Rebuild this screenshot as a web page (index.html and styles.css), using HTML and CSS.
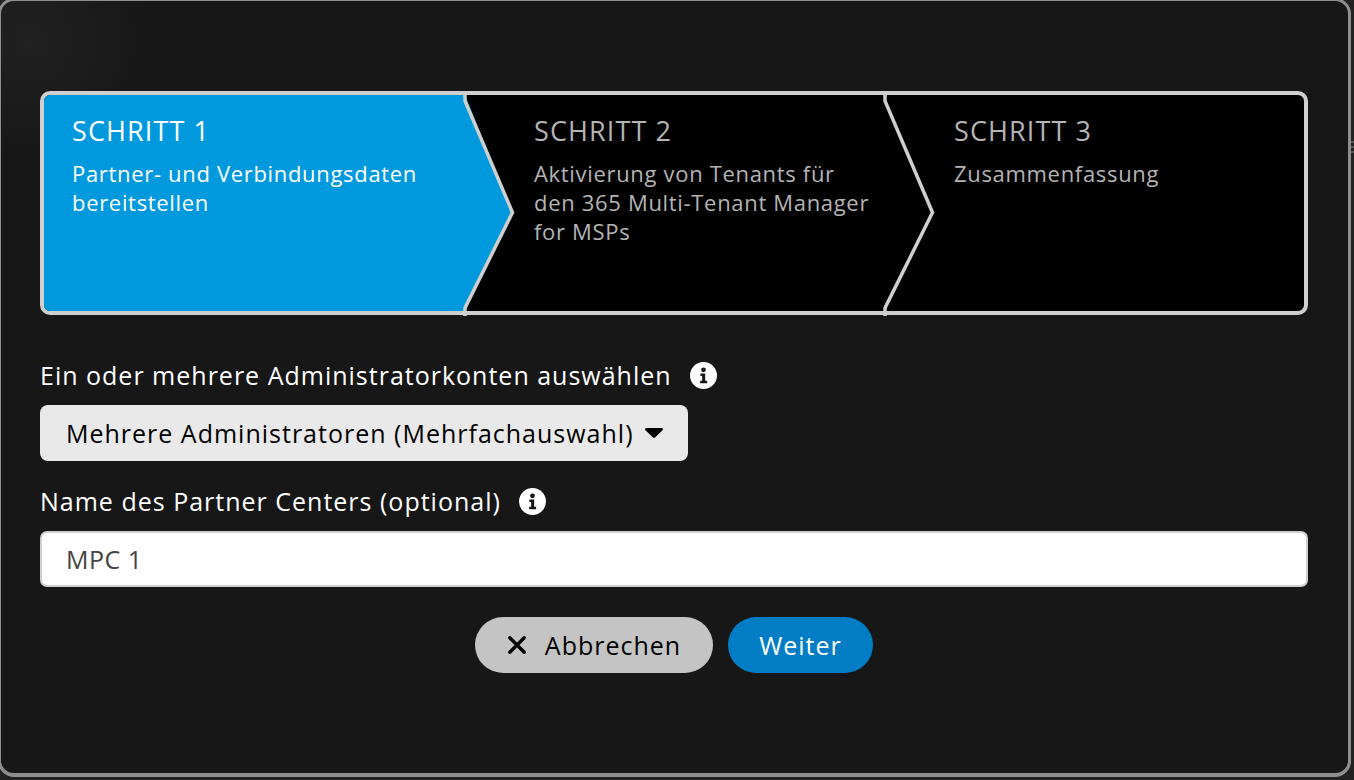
FILE: index.html
```html
<!DOCTYPE html>
<html lang="de">
<head>
<meta charset="utf-8">
<title>Schritt 1</title>
<link rel="stylesheet" href="styles.css">
</head>
<body>
<div class="grip"><i></i><i></i><i></i></div>
<main class="modal">
  <div class="stepper">
    <section class="step step-active">
      <svg class="arrow" viewBox="0 0 50 216" width="50" height="216" aria-hidden="true">
        <polygon points="0,0 47.500,117.500 0,216" fill="#0099dd"/>
        <path d="M0 0V6L47.500 117.500 0 213V221" fill="none" stroke="#cfcfcf" stroke-width="3.500"/>
      </svg>
      <h2 class="step-title">SCHRITT 1</h2>
      <p class="step-text">Partner- und Verbindungsdaten bereitstellen</p>
    </section>
    <section class="step step-mid">
      <svg class="arrow" viewBox="0 0 50 216" width="50" height="216" aria-hidden="true">
        <path d="M0 0V6L47.500 117.500 0 213V221" fill="none" stroke="#cfcfcf" stroke-width="3.500"/>
      </svg>
      <h2 class="step-title">SCHRITT 2</h2>
      <p class="step-text">Aktivierung von Tenants für den 365 Multi-Tenant Manager for MSPs</p>
    </section>
    <section class="step step-last">
      <h2 class="step-title">SCHRITT 3</h2>
      <p class="step-text">Zusammenfassung</p>
    </section>
  </div>

  <div class="label-row label-first">
    <label class="label">Ein oder mehrere Administratorkonten auswählen</label>
    <svg class="info" viewBox="0 0 26 26" width="27" height="27" aria-hidden="true">
      <circle cx="13" cy="13" r="13" fill="#fff"/>
      <circle cx="13" cy="7.500" r="2.300" fill="#171717"/>
      <path d="M10 11h4.600v7H16.500v2.400H9.800V18h1.900v-4.600H10z" fill="#171717"/>
    </svg>
  </div>
  <button class="select" type="button">
    <span>Mehrere Administratoren (Mehrfachauswahl)</span>
    <svg class="caret" viewBox="0 0 18 10" width="18" height="10" aria-hidden="true">
      <path d="M1.500 0h15c1.200 0 1.800 1.400 1 2.200L10 9.600c-.6.500-1.400.500-2 0L.5 2.200C-.3 1.400.3 0 1.500 0z" fill="#000"/>
    </svg>
  </button>

  <div class="label-row label-second">
    <label class="label">Name des Partner Centers (optional)</label>
    <svg class="info" viewBox="0 0 26 26" width="27" height="27" aria-hidden="true">
      <circle cx="13" cy="13" r="13" fill="#fff"/>
      <circle cx="13" cy="7.500" r="2.300" fill="#171717"/>
      <path d="M10 11h4.600v7H16.500v2.400H9.800V18h1.900v-4.600H10z" fill="#171717"/>
    </svg>
  </div>
  <div class="input">MPC 1</div>

  <div class="actions">
    <button class="btn btn-cancel" type="button">
      <svg viewBox="0 0 18 18" width="20" height="20" aria-hidden="true">
        <path d="M2.500 2.500l13 13M15.500 2.500l-13 13" stroke="#000" stroke-width="3" stroke-linecap="round" fill="none"/>
      </svg>
      <span>Abbrechen</span>
    </button>
    <button class="btn btn-next" type="button">Weiter</button>
  </div>
</main>
</body>
</html>
```

FILE: styles.css
```css
* {
  box-sizing: border-box;
}

html,
body {
  height: 100%;
}

body {
  margin: 0;
  overflow: hidden;
  background: #222;
  font-family: "Open Sans", "Liberation Sans", sans-serif;
}

.grip {
  position: absolute;
  top: 141px;
  left: 1351px;
  display: flex;
  flex-direction: column;
  gap: 3px;
}

.grip i {
  display: block;
  width: 3px;
  height: 2px;
  background: #555;
}

.modal {
  width: 1353px;
  height: 779px;
  margin: -2px 0 0 -2px;
  padding: 90px 40px 0 39px;
  border: 3px solid #8e8e8e;
  border-width: 3px 3px 4px 3px;
  border-radius: 16px;
  background: radial-gradient(circle at 30px 40px, #212121 0, #171717 120px), #171717;
}

.stepper {
  display: flex;
  height: 224px;
  border: 4px solid #cfcfcf;
  border-radius: 10px;
  background: #000;
  color: #b4b4b4;
}

.step {
  position: relative;
  flex: none;
  padding-top: 19px;
}

.step-active {
  width: 421px;
  padding-left: 28px;
  padding-right: 20px;
  border-radius: 6px 0 0 6px;
  background: #0099dd;
  color: #fff;
}

.step-mid {
  width: 420px;
  padding-left: 69px;
  padding-right: 10px;
}

.step-last {
  flex: 1;
  padding-left: 69px;
}

.arrow {
  position: absolute;
  top: 0;
  left: 100%;
  z-index: 1;
  overflow: visible;
}

.step-title {
  margin: 0;
  font-size: 27px;
  font-weight: 400;
  line-height: 34px;
  letter-spacing: 1.1px;
}

.step-text {
  margin: 11px 0 0;
  font-size: 22px;
  line-height: 29px;
  letter-spacing: 0.68px;
}

.label-row {
  display: flex;
  align-items: center;
  gap: 18px;
  height: 32px;
  color: #fff;
}

.label-first {
  margin-top: 44px;
}

.label-second {
  margin-top: 24px;
}

.label {
  font-size: 25px;
  letter-spacing: 1px;
}

.info {
  flex: none;
}

.select {
  display: flex;
  align-items: center;
  gap: 11px;
  width: 648px;
  height: 56px;
  margin-top: 14px;
  padding: 0 0 0 26px;
  border: 0;
  border-radius: 8px;
  background: #e9e9e9;
  color: #000;
  font: inherit;
  font-size: 25px;
  letter-spacing: 1px;
}

.input {
  display: flex;
  align-items: center;
  height: 56px;
  margin-top: 14px;
  padding-left: 24px;
  border: 2px solid #cfcfcf;
  border-radius: 7px;
  background: #fff;
  color: #444;
  font-size: 25px;
  letter-spacing: 0.5px;
}

.actions {
  display: flex;
  justify-content: center;
  gap: 15px;
  margin-top: 30px;
}

.btn {
  display: flex;
  align-items: center;
  justify-content: center;
  height: 56px;
  border: 0;
  border-radius: 28px;
  font: inherit;
  font-size: 25px;
  letter-spacing: 1px;
}

.btn-cancel {
  gap: 18px;
  width: 238px;
  background: #c4c4c4;
  color: #000;
}

.btn-next {
  width: 145px;
  background: #007dc5;
  color: #fff;
}
```
